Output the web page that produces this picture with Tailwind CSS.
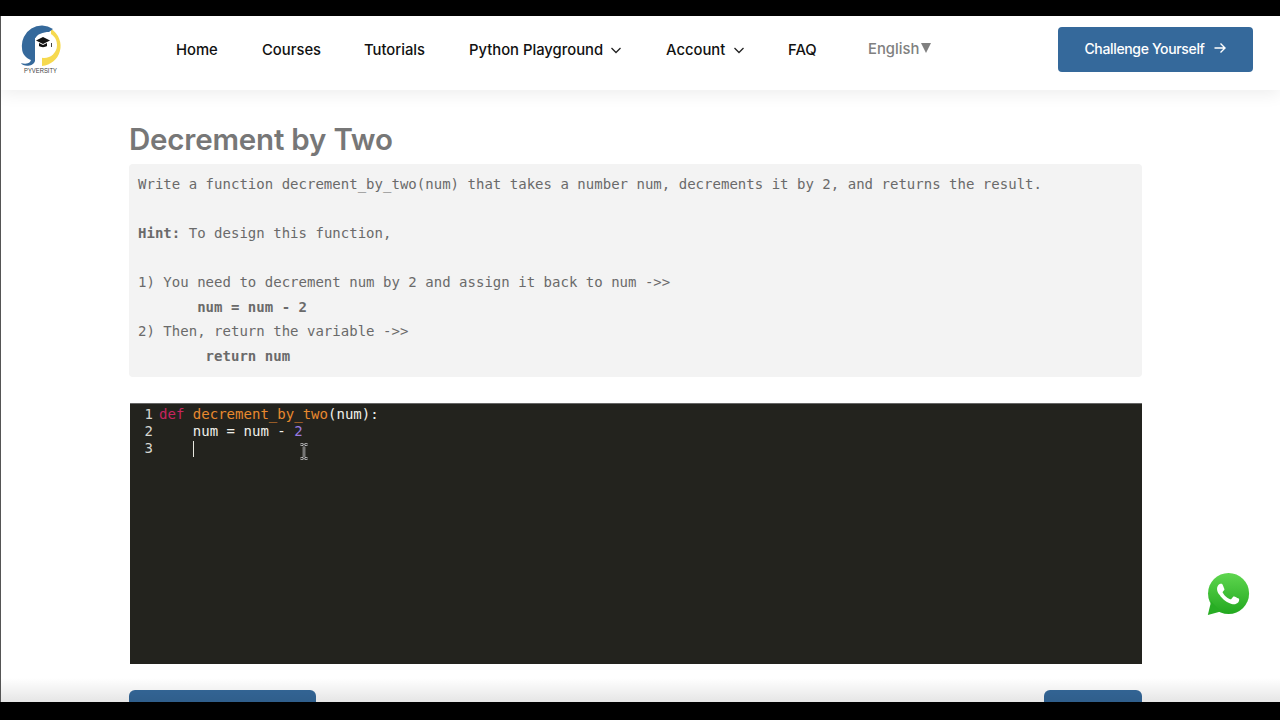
<!DOCTYPE html>
<html lang="en">
<head>
    <meta charset="UTF-8">
    <meta name="viewport" content="width=device-width, initial-scale=1.0">
    <script src="https://cdn.jsdelivr.net/npm/@tailwindcss/browser@4"></script>
    <title>Decrement by Two</title>
</head>
<body class="bg-black h-[720px] overflow-hidden font-['Inter',sans-serif]">
    <div class="relative mt-4 h-[686px] overflow-hidden bg-white border-l border-[#555]">

        <!-- top nav -->
        <nav class="relative z-10 flex items-center h-[74px] bg-white shadow-[0_4px_16px_rgba(0,0,0,0.07)]">
            <div class="w-[175px] h-full shrink-0 pl-[18px] pt-[8px]">
                <svg class="block" width="46" height="52" viewBox="0 0 46 52">
                    <path d="M32 5 A20 20 0 0 1 23 42 L17 42 L17 30 L32 30 Z" fill="#f6d94f"/>
                    <circle cx="25" cy="21" r="13" fill="#fff"/>
                    <path d="M34 5 A20 20 0 0 0 3 24 C3 30 7 34 12 36 L11 38 C9 40 5 40 2 39 C4 43 14 43 16 37 L16 15 C18 10 24 8 30 8 Z" fill="#35699b"/>
                    <rect x="16" y="14" width="7" height="29" fill="#fff"/>
                    <path d="M17 16.500 L24 13 L31 16.500 L24 20 Z" fill="#111"/>
                    <path d="M20 19 L20 22 C22 23.500 26 23.500 28 22 L28 19 L24 21 Z" fill="#111"/>
                    <rect x="32" y="19" width="1" height="4" fill="#444"/>
                    <text x="21.500" y="48.500" text-anchor="middle" font-family="Liberation Sans" font-size="6.500" fill="#444" textLength="33" lengthAdjust="spacingAndGlyphs">PYVERSITY</text>
                </svg>
            </div>
            <ul class="flex items-center -mt-[6px] text-[14.800px] font-medium text-[#111] whitespace-nowrap">
                <li class="w-[86px]">Home</li>
                <li class="w-[102px]">Courses</li>
                <li class="w-[105px]">Tutorials</li>
                <li class="w-[197px] flex items-center gap-[7px]">
                    Python Playground
                    <svg width="12" height="12" viewBox="0 0 12 12" fill="none" stroke="#222" stroke-width="1.300"><path d="M1.500 4 L6 8.500 L10.500 4"/></svg>
                </li>
                <li class="w-[122px] flex items-center gap-2">
                    Account
                    <svg width="12" height="12" viewBox="0 0 12 12" fill="none" stroke="#222" stroke-width="1.300"><path d="M1.500 4 L6 8.500 L10.500 4"/></svg>
                </li>
                <li class="w-[80px]">FAQ</li>
                <li class="flex items-center text-[#808080] -mt-[1px]">
                    English<span class="ml-[2px] w-0 h-0 border-x-[5px] border-x-transparent border-t-[10px] border-t-[#808080] -mt-[3px]"></span>
                </li>
            </ul>
            <a class="ml-auto mr-[27px] -mt-[8px] pb-[2px] flex items-center justify-center gap-2 w-[195px] h-[45px] rounded bg-[#35699b] text-white text-[14px] tracking-[-0.35px] font-medium">
                Challenge Yourself
                <svg width="14" height="14" viewBox="0 0 14 14" fill="none" stroke="#fff" stroke-width="1.400"><path d="M1.500 7 H12 M7.500 2.500 L12 7 L7.500 11.500"/></svg>
            </a>
        </nav>

        <main class="ml-[128px] w-[1013px]">
            <h1 class="mt-[29px] h-[40px] text-[29.500px] leading-[40px] font-semibold text-[#777] tracking-[-0.2px]">Decrement by Two</h1>

            <pre class="mt-[5px] h-[213px] pt-[8px] px-[9px] rounded-sm bg-[#f3f3f3] text-[#6a6a6a] text-[14px] tracking-[0.02px] leading-[24.500px] font-['DejaVu_Sans_Mono',monospace]">Write a function decrement_by_two(num) that takes a number num, decrements it by 2, and returns the result.

<b>Hint:</b> To design this function,

1) You need to decrement num by 2 and assign it back to num -&gt;&gt;
       <b>num = num - 2</b>
2) Then, return the variable -&gt;&gt;
        <b>return num</b></pre>

            <!-- code editor -->
            <div class="relative mt-[26px] ml-px flex h-[261px] pt-[2px] bg-[#23231e] border-t border-[#666] text-[14px] tracking-[0.02px] leading-[17px] font-['DejaVu_Sans_Mono',monospace]">
                <div class="w-[23px] text-right text-[#d6d6d0]">
                    <div>1</div>
                    <div>2</div>
                    <div>3</div>
                </div>
                <pre class="ml-[6px] text-[#f0f0ea] font-['DejaVu_Sans_Mono',monospace]"><span class="text-[#c8245f]">def</span> <span class="text-[#e8892e]">decrement_by_two</span>(num):
    num = num - <span class="text-[#9a7ae0]">2</span>
    </pre>
                <span class="absolute left-[63px] top-[37px] w-px h-[16px] bg-[#e8e8e0]"></span>
                <svg class="absolute left-[169px] top-[39px]" width="10" height="17" viewBox="0 0 10 17" fill="none">
                    <path d="M1.500 1.500 H3.500 L5 2.500 L6.500 1.500 H8.500 M5 2.500 V14.500 M1.500 15.500 H3.500 L5 14.500 L6.500 15.500 H8.500" stroke="#ccc" stroke-width="2.500"/>
                    <path d="M1.500 1.500 H3.500 L5 2.500 L6.500 1.500 H8.500 M5 2.500 V14.500 M1.500 15.500 H3.500 L5 14.500 L6.500 15.500 H8.500" stroke="#222" stroke-width="1"/>
                </svg>
            </div>

            <div class="mt-[26px] flex justify-between">
                <div class="w-[187px] h-[40px] rounded-md bg-[#35699b]"></div>
                <div class="w-[98px] h-[40px] rounded-md bg-[#35699b]"></div>
            </div>
        </main>

        <!-- bottom fade -->
        <div class="absolute left-0 right-0 bottom-0 h-[24px] bg-gradient-to-b from-transparent to-black/10"></div>

        <!-- whatsapp button -->
        <svg class="absolute left-[1205px] top-[556px]" width="44" height="44" viewBox="0 0 24 24">
            <defs>
                <linearGradient id="wa" x1="0" y1="0" x2="0" y2="1">
                    <stop offset="0" stop-color="#5fd64f"/>
                    <stop offset="1" stop-color="#22a81f"/>
                </linearGradient>
            </defs>
            <circle cx="12.300" cy="11.700" r="11.200" fill="url(#wa)"/>
            <path d="M1 23.500 L2.800 16 L8 21.500 Z" fill="#28ad24"/>
            <path fill="#fff" d="M17.472 14.382c-.297-.149-1.758-.867-2.03-.967-.273-.099-.471-.148-.67.15-.197.297-.767.966-.94 1.164-.173.199-.347.223-.644.075-.297-.15-1.255-.463-2.39-1.475-.883-.788-1.48-1.761-1.653-2.059-.173-.297-.018-.458.13-.606.134-.133.298-.347.446-.52.149-.174.198-.298.298-.497.099-.198.05-.371-.025-.52-.075-.149-.669-1.612-.916-2.207-.242-.579-.487-.5-.669-.51-.173-.008-.371-.01-.57-.01-.198 0-.52.074-.792.372-.272.297-1.04 1.016-1.04 2.479 0 1.462 1.065 2.875 1.213 3.074.149.198 2.096 3.2 5.077 4.487.709.306 1.262.489 1.694.625.712.227 1.36.195 1.871.118.571-.085 1.758-.719 2.006-1.413.248-.694.248-1.289.173-1.413-.074-.124-.272-.198-.57-.347"/>
        </svg>
    </div>
</body>
</html>
